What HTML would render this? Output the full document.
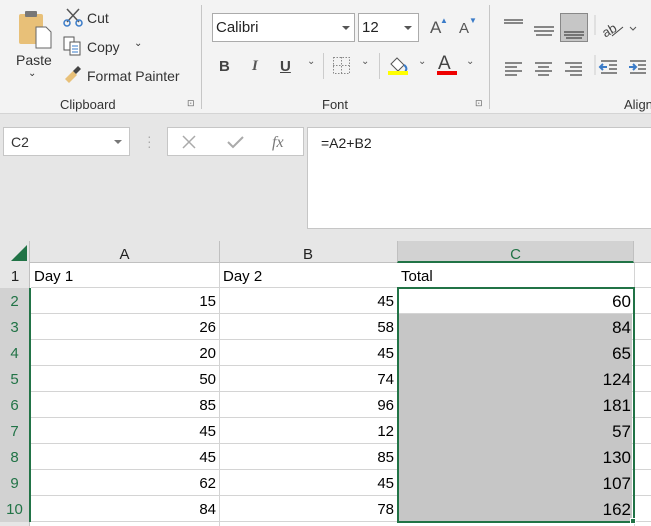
<!DOCTYPE html>
<html><head><style>
*{margin:0;padding:0;box-sizing:border-box}
body{width:651px;height:526px;overflow:hidden;background:#e6e6e6;font-family:"Liberation Sans",sans-serif;position:relative;color:#222}
.a{position:absolute}
.rib{left:0;top:0;width:651px;height:114px;background:#f3f3f3;border-bottom:1px solid #d4d4d4}
.t{font-size:14px;color:#333;white-space:nowrap}
.box{background:#fff;border:1px solid #ababab}
.cell{position:absolute;font-size:15px;color:#000;white-space:nowrap;line-height:28px}
</style></head><body>
<div class="a rib"></div>
<!-- Clipboard -->
<svg class="a" style="left:17px;top:9px" width="38" height="40"><rect x="2" y="5" width="24" height="30" rx="2" fill="#e8c078"/><rect x="8" y="2" width="12" height="6" rx="1" fill="#777"/><path d="M19 18h10l5 5v16H19z" fill="#fff" stroke="#666"/></svg>
<div class="a t" style="left:16px;top:52px">Paste</div>
<div class="a t" style="left:28px;top:68px;font-size:10px">⌄</div>
<svg class="a" style="left:63px;top:7px" width="20" height="20"><path d="M4 2l12 13M16 2L4 15" stroke="#555" stroke-width="1.5"/><circle cx="4" cy="16" r="3" fill="none" stroke="#3a7bc8" stroke-width="1.5"/><circle cx="16" cy="16" r="3" fill="none" stroke="#3a7bc8" stroke-width="1.5"/></svg>
<div class="a t" style="left:87px;top:10px">Cut</div>
<svg class="a" style="left:63px;top:36px" width="20" height="20"><rect x="1" y="1" width="10" height="13" fill="#fff" stroke="#555"/><rect x="7" y="6" width="10" height="13" fill="#fff" stroke="#555"/><path d="M9 10h6M9 13h6M9 16h6" stroke="#3a7bc8"/></svg>
<div class="a t" style="left:87px;top:39px">Copy</div>
<div class="a t" style="left:134px;top:38px;font-size:10px">⌄</div>
<svg class="a" style="left:63px;top:65px" width="20" height="18"><path d="M2 14l8-8 4 4-8 8z" fill="#e8c078"/><path d="M10 6l5-5 3 3-5 5z" fill="#444"/></svg>
<div class="a t" style="left:87px;top:68px">Format Painter</div>
<div class="a t" style="left:60px;top:97px;font-size:13px">Clipboard</div>
<div class="a t" style="left:187px;top:98px;font-size:9px;color:#666">⊡</div>
<div class="a" style="left:201px;top:5px;width:1px;height:104px;background:#c6c6c6"></div>
<!-- Font -->
<div class="a box" style="left:212px;top:13px;width:143px;height:29px"><span class="t" style="position:absolute;left:3px;top:5px;font-size:15px;color:#222">Calibri</span><span style="position:absolute;right:4px;top:12px;border:4px solid transparent;border-top:4px solid #555"></span></div>
<div class="a box" style="left:358px;top:13px;width:61px;height:29px"><span class="t" style="position:absolute;left:3px;top:5px;font-size:15px;color:#222">12</span><span style="position:absolute;right:6px;top:12px;border:4px solid transparent;border-top:4px solid #555"></span></div>
<div class="a t" style="left:430px;top:18px;font-size:17px;color:#555">A</div><div class="a" style="left:440px;top:16px;font-size:8px;color:#3a7bc8">▲</div>
<div class="a t" style="left:459px;top:20px;font-size:15px;color:#555">A</div><div class="a" style="left:469px;top:16px;font-size:8px;color:#3a7bc8">▼</div>
<div class="a t" style="left:219px;top:58px;font-weight:bold;font-size:15px;color:#444">B</div>
<div class="a t" style="left:252px;top:58px;font-style:italic;font-weight:bold;font-size:15px;color:#555;font-family:'Liberation Serif',serif">I</div>
<div class="a t" style="left:280px;top:58px;font-weight:bold;font-size:15px;color:#444;text-decoration:underline">U</div>
<div class="a t" style="left:307px;top:56px;font-size:10px;color:#555">⌄</div>
<div class="a" style="left:323px;top:53px;width:1px;height:26px;background:#ccc"></div>
<svg class="a" style="left:333px;top:57px" width="18" height="18"><rect x="0.5" y="0.5" width="16" height="16" fill="none" stroke="#888" stroke-dasharray="1.5 1.5"/><path d="M8.5 0v17M0 8.5h17" stroke="#888" stroke-dasharray="1.5 1.5"/></svg>
<div class="a t" style="left:361px;top:56px;font-size:10px;color:#555">⌄</div>
<div class="a" style="left:379px;top:53px;width:1px;height:26px;background:#ccc"></div>
<svg class="a" style="left:388px;top:55px" width="22" height="22"><path d="M3 9l6-6 7 7-6 6z" fill="#fff" stroke="#555"/><path d="M16 10c3 2 3 5 1 6" stroke="#3a7bc8" stroke-width="2" fill="none"/><rect x="0" y="16" width="20" height="4" fill="#ffff00"/></svg>
<div class="a t" style="left:418px;top:56px;font-size:10px;color:#555">⌄</div>
<div class="a t" style="left:438px;top:53px;font-size:19px;color:#444">A</div>
<div class="a" style="left:437px;top:71px;width:20px;height:4px;background:#e00"></div>
<div class="a t" style="left:466px;top:56px;font-size:10px;color:#555">⌄</div>
<div class="a t" style="left:322px;top:97px;font-size:13px">Font</div>
<div class="a t" style="left:475px;top:98px;font-size:9px;color:#666">⊡</div>
<div class="a" style="left:489px;top:5px;width:1px;height:104px;background:#c6c6c6"></div>
<!-- Alignment -->
<svg class="a" style="left:500px;top:10px" width="151" height="70">
<g stroke="#444" stroke-width="1.2"><path d="M4 10h19M4 13h19"/><path d="M34 17h20M34 21h20M36 25h16"/></g>
<rect x="60.5" y="3.5" width="27" height="28" fill="#c6c6c6" stroke="#888"/>
<g stroke="#444" stroke-width="1.2"><path d="M64 22h20M64 25h20M66 28h16"/></g>
<path d="M95 5v20" stroke="#ccc"/>
<text x="101" y="24" font-size="13" fill="#444" transform="rotate(-30 110 18)" font-family="Liberation Sans">ab</text>
<path d="M112 26l11-9" stroke="#444"/>
<path d="M130 17l3 3 3-3" stroke="#555" fill="none"/>
<g stroke="#444" stroke-width="1.2"><path d="M5 53h17M5 57h12M5 61h17M5 65h12"/><path d="M35 53h17M38 57h11M35 61h17M38 65h11"/><path d="M65 53h17M70 57h12M65 61h17M70 65h12"/></g>
<path d="M95 45v20" stroke="#ccc"/>
<g stroke="#444" stroke-width="1.2"><path d="M101 51h16M109 55h8M109 59h8M101 63h16"/><path d="M130 51h16M138 55h8M138 59h8M130 63h16"/></g>
<path d="M100 57h7M103 54l-3 3 3 3" stroke="#3a7bc8" stroke-width="2" fill="none"/>
<path d="M129 57h7M133 54l3 3-3 3" stroke="#3a7bc8" stroke-width="2" fill="none"/>
</svg>
<div class="a t" style="left:624px;top:97px;font-size:13px">Align</div>
<!-- Formula bar -->
<div class="a box" style="left:3px;top:127px;width:127px;height:29px;border-color:#c6c6c6"><span style="position:absolute;left:7px;top:6px;font-size:14px;color:#333">C2</span><span style="position:absolute;right:7px;top:12px;border:4px solid transparent;border-top:4px solid #777"></span></div>
<div class="a" style="left:147px;top:134px;color:#aaa;font-size:14px;line-height:5px">·<br>·<br>·</div>
<div class="a box" style="left:167px;top:127px;width:137px;height:29px;border-color:#c6c6c6"></div>
<svg class="a" style="left:180px;top:133px" width="115" height="18"><path d="M3 3l12 12M15 3L3 15" stroke="#aaa" stroke-width="1.5"/><path d="M48 9l5 5 10-10" stroke="#aaa" stroke-width="2" fill="none"/><text x="92" y="14" font-size="16" font-style="italic" fill="#777" font-family="Liberation Serif">fx</text></svg>
<div class="a box" style="left:307px;top:127px;width:350px;height:102px;border-color:#c6c6c6"><span style="position:absolute;left:13px;top:7px;font-size:14px;color:#222">=A2+B2</span></div>
<!-- Grid -->
<div class="a" style="left:0;top:241px;width:651px;height:285px;background:#fff"></div>
<div class="a" style="left:0;top:241px;width:651px;height:22px;background:#e6e6e6;border-bottom:1px solid #c0c0c0"></div>
<div class="a" style="left:0;top:241px;width:30px;height:285px;background:#e6e6e6;border-right:1px solid #c0c0c0"></div>
<svg class="a" style="left:10px;top:244px" width="18" height="18"><path d="M17 1v16H1z" fill="#217346"/></svg>
<div class="a" style="left:219px;top:241px;width:1px;height:22px;background:#c0c0c0"></div>
<div class="a" style="left:397px;top:241px;width:237px;height:22px;background:#d2d2d2;border-bottom:2px solid #217346;border-left:1px solid #c0c0c0;border-right:1px solid #c0c0c0"></div>
<div class="a" style="left:30px;top:242px;width:189px;text-align:center;font-size:15px;line-height:25px;color:#222">A</div>
<div class="a" style="left:219px;top:242px;width:178px;text-align:center;font-size:15px;line-height:25px;color:#222">B</div>
<div class="a" style="left:397px;top:242px;width:237px;text-align:center;font-size:15px;line-height:25px;color:#217346">C</div>
<div class="a" style="left:0;top:263px;width:30px;height:25px;text-align:center;font-size:15px;line-height:28px;color:#222">1</div>
<div class="a" style="left:0;top:288px;width:31px;height:234px;background:#d2d2d2;border-right:2px solid #217346"></div>
<div id="g"></div>
<div class="a" style="left:399px;top:314px;width:233px;height:207px;background:#c6c6c6"></div>
<div class="cell" style="left:34px;top:263px">Day 1</div>
<div class="cell" style="left:223px;top:263px">Day 2</div>
<div class="cell" style="left:401px;top:263px">Total</div>
<script>
var A=[15,26,20,50,85,45,45,62,84],B=[45,58,45,74,96,12,85,45,78],C=[60,84,65,124,181,57,130,107,162],h='';
for(var r=0;r<=9;r++){var y=288+26*r-1;h+='<div class="a" style="left:31px;top:'+y+'px;width:620px;height:1px;background:#d4d4d4"></div>';}
h+='<div class="a" style="left:219px;top:263px;width:1px;height:263px;background:#d4d4d4"></div><div class="a" style="left:634px;top:263px;width:1px;height:263px;background:#d4d4d4"></div>';
for(var i=0;i<9;i++){var y=288+26*i;
h+='<div class="a" style="left:0;top:'+y+'px;width:29px;text-align:center;font-size:15px;line-height:28px;color:#217346">'+(i+2)+'</div>';
h+='<div class="cell" style="left:30px;width:186px;text-align:right;top:'+y+'px">'+A[i]+'</div>';
h+='<div class="cell" style="left:219px;width:175px;text-align:right;top:'+y+'px">'+B[i]+'</div>';
h+='<div class="cell" style="left:397px;width:234px;text-align:right;top:'+y+'px;font-size:17px;z-index:3">'+C[i]+'</div>';}
document.getElementById('g').innerHTML=h;
</script>
<div class="a" style="left:397px;top:287px;width:238px;height:236px;border:2px solid #217346;z-index:2"></div>
<div class="a" style="left:630px;top:518px;width:6px;height:6px;background:#217346;border:1px solid #fff;z-index:4"></div>
</body></html>
